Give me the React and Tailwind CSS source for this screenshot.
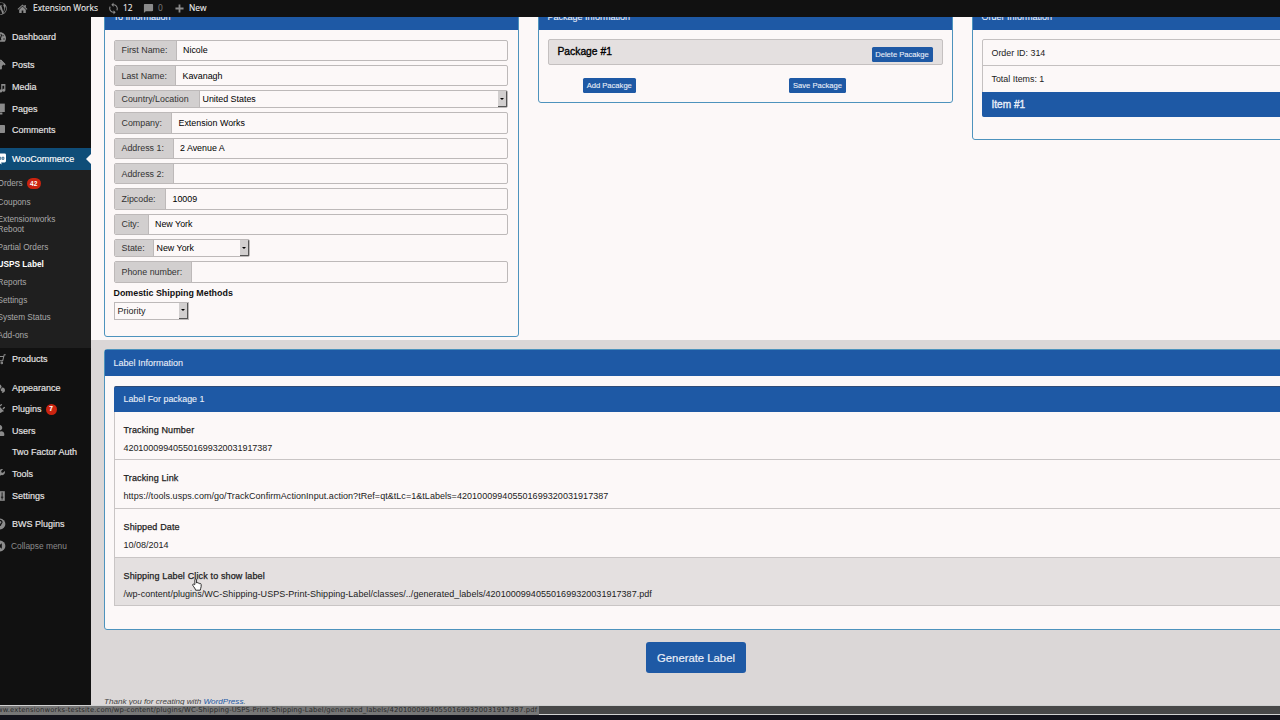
import React from 'react';
import clsx from 'clsx';
import { FaWordpressSimple, FaPaintBrush, FaPlug, FaWrench, FaUser, FaThumbtack, FaTachometerAlt } from 'react-icons/fa';
import { MdSync, MdModeComment } from 'react-icons/md';

const HomeIcon = () => (
    <svg viewBox="0 0 20 20" className="size-[11px]" fill="currentColor">
        <path d="M10 2.5 1 11l1.2 1.3L10 5l7.800 7.300L19 11l-3-2.800V3.500h-2.500v2.300z" />
        <path d="M10 6.500 4 12.200V18h4.500v-4.500h3V18H16v-5.800z" />
    </svg>
);

const PlusIcon = () => (
    <svg viewBox="0 0 10 10" className="size-[9px]" fill="currentColor">
        <path d="M4 0.500h2v3.500h3.500v2H6v3.500H4V6H.5V4H4z" />
    </svg>
);

const MediaIcon = () => (
    <svg viewBox="0 0 20 20" className="size-[12px]" fill="currentColor">
        <path d="M1 3h7l1 1h1v7H0V4h1zM12 5h7v10.500a2.500 2.500 0 1 1-2-2.400V8h-3v8.500a2.500 2.500 0 1 1-2-2.400z" />
    </svg>
);

const PagesIcon = () => (
    <svg viewBox="0 0 20 20" className="size-[12px]" fill="currentColor">
        <path d="M6 1h12v14H6z" />
        <path d="M2 5h3v11h9v3H2z" />
    </svg>
);

const WooIcon = () => (
    <svg viewBox="0 0 20 16" className="h-[12px] w-[14px]">
        <path d="M2 0h16a2 2 0 0 1 2 2v9a2 2 0 0 1-2 2h-5l1 3-5-3H2a2 2 0 0 1-2-2V2a2 2 0 0 1 2-2z" fill="#fff" />
        <path d="M10 5.500h2.500v3H10zM14.500 5.500H17v3h-2.500z" fill="none" stroke="#0f4d78" strokeWidth="1.100" />
    </svg>
);

const CartIcon = () => (
    <svg viewBox="0 0 20 20" className="size-[12px]" fill="none" stroke="currentColor" strokeWidth="1.700">
        <path d="M19.500 3H17l-2.500 10H4L2 6h13.500" />
        <circle cx="6" cy="16.500" r="1.300" />
        <circle cx="13" cy="16.500" r="1.300" />
    </svg>
);

const SettingsIcon = () => (
    <svg viewBox="0 0 20 20" className="size-[12px]">
        <path d="M2 2h16v16H2z" fill="currentColor" />
        <path d="M7 4v12M13.500 4v12M5 8h4M11.500 12h4" stroke="#111" strokeWidth="1.500" />
    </svg>
);

const BwsIcon = () => (
    <svg viewBox="0 0 20 20" className="size-[12px]">
        <circle cx="10" cy="10" r="9" fill="currentColor" />
        <path d="M8 4c4 0 6 1 5 4-1 2-3 2-2 5" fill="none" stroke="#111" strokeWidth="2" />
    </svg>
);

const CollapseIcon = () => (
    <svg viewBox="0 0 20 20" className="size-[12px]">
        <circle cx="10" cy="10" r="9" fill="currentColor" />
        <path d="M13 5.500v9L7 10z" fill="#111" />
    </svg>
);

const menuTop = [
    { label: 'Dashboard', icon: <FaTachometerAlt className="size-[12px]" /> },
    { separator: true },
    { label: 'Posts', icon: <FaThumbtack className="size-[11px] rotate-45" /> },
    { label: 'Media', icon: <MediaIcon /> },
    { label: 'Pages', icon: <PagesIcon /> },
    { label: 'Comments', icon: <MdModeComment className="size-[12px] -scale-x-100" /> },
    { separator: true },
];

const subMenu = [
    { label: 'Orders', badge: '42' },
    { label: 'Coupons' },
    { label: 'Extensionworks Reboot' },
    { label: 'Partial Orders' },
    { label: 'USPS Label', current: true },
    { label: 'Reports' },
    { label: 'Settings' },
    { label: 'System Status' },
    { label: 'Add-ons' },
];

const menuBottom = [
    { label: 'Products', icon: <CartIcon /> },
    { separator: true },
    { label: 'Appearance', icon: <FaPaintBrush className="size-[11px] -rotate-90" /> },
    { label: 'Plugins', icon: <FaPlug className="size-[11px] rotate-45" />, badge: '7' },
    { label: 'Users', icon: <FaUser className="size-[11px]" /> },
    { label: 'Two Factor Auth' },
    { label: 'Tools', icon: <FaWrench className="size-[11px]" /> },
    { label: 'Settings', icon: <SettingsIcon /> },
    { separator: true },
    { label: 'BWS Plugins', icon: <BwsIcon /> },
];

const MenuItem = ({ item }) => {
    if (item.separator) return <li className="h-[7px]" />;
    return (
        <li className="flex h-[21.6px] items-center text-[9px] text-[#e6e6e6] [-webkit-text-stroke:0.15px]">
            <span className="-ml-[6px] flex w-[18px] shrink-0 justify-start text-[#8b8b8b]">{item.icon}</span>
            <span className="whitespace-nowrap">{item.label}</span>
            {item.badge && (
                <span className="ml-[4px] flex size-[11px] items-center justify-center rounded-full bg-[#cb2410] text-[6.5px] font-bold text-white">
                    {item.badge}
                </span>
            )}
        </li>
    );
};

const Sidebar = () => (
    <nav className="w-[91px] shrink-0 overflow-hidden bg-[#111] pt-[26px]">
        <ul>
            {menuTop.map((item, i) => <MenuItem key={i} item={item} />)}
            <li>
                <div className="relative flex h-[21.6px] items-center bg-[#0f4d78] text-[9px] text-white [-webkit-text-stroke:0.15px]">
                    <span className="-ml-[8px] w-[20px] shrink-0"><WooIcon /></span>
                    WooCommerce
                    <span className="absolute right-0 top-[6px] border-y-[5px] border-r-[5px] border-y-transparent border-r-[#fcf8f8]" />
                </div>
                <ul className="bg-[#1f1f1f] pb-[3.6px] pt-[4.4px] text-[8.25px] text-[#a9a9a9]">
                    {subMenu.map((item) => (
                        <li
                            key={item.label}
                            className={clsx(
                                '-ml-[2.5px] flex min-h-[17.6px] items-center leading-[10.3px]',
                                item.label === 'Orders' && 'h-[20px]',
                                item.label.startsWith('Ext') && 'h-[27.600px] w-[75px]',
                                item.current && 'font-bold text-white'
                            )}
                        >
                            {item.label}
                            {item.badge && (
                                <span className="ml-[4px] flex h-[11px] w-[14px] items-center justify-center rounded-full bg-[#cb2410] text-[6.5px] font-bold text-white">
                                    {item.badge}
                                </span>
                            )}
                        </li>
                    ))}
                </ul>
            </li>
            {menuBottom.map((item, i) => <MenuItem key={i} item={item} />)}
            <li className="flex h-[21.6px] items-center text-[8.400px] text-[#8b8b8b]">
                <span className="-ml-[6px] w-[17px] shrink-0"><CollapseIcon /></span>
                Collapse menu
            </li>
        </ul>
    </nav>
);

const AdminBar = () => (
    <header className="absolute inset-x-0 top-0 z-10 flex h-[17px] items-center bg-[#111] pb-[1px] font-['Open_Sans',sans-serif] text-[8.4px] text-[#eee] [-webkit-text-stroke:0.1px]">
        <FaWordpressSimple className="-ml-[6px] size-[13px] text-[#8b8b8b]" />
        <span className="ml-[10px] text-[#8b8b8b]"><HomeIcon /></span>
        <span className="ml-[5px] w-[64px] whitespace-nowrap">Extension Works</span>
        <MdSync className="ml-[10px] size-[13px] text-[#8b8b8b]" />
        <span className="ml-[3px] w-[10px]">12</span>
        <MdModeComment className="ml-[10px] size-[11px] -scale-x-100 text-[#8b8b8b]" />
        <span className="ml-[4px] w-[5px] text-[#777]">0</span>
        <span className="ml-[12px] text-[#8b8b8b]"><PlusIcon /></span>
        <span className="ml-[5px]">New</span>
    </header>
);

const Panel = ({ title, className, children }) => (
    <section className={clsx('rounded-[3px] border border-[#4d93bd] bg-[#fcf8f8]', className)}>
        <h3 className="flex h-[26px] items-center bg-[#1e59a5] pl-[9px] text-[9px] text-[#e9eef8] [-webkit-text-stroke:0.1px]">{title}</h3>
        {children}
    </section>
);

const SelectArrow = () => (
    <span className="flex h-full w-[9px] shrink-0 items-center justify-center border-b border-r border-[#555] bg-[#d2cfcf]">
        <span className="border-x-2 border-t-2 border-x-transparent border-t-black" />
    </span>
);

const fields = [
    { label: 'First Name:', value: 'Nicole', width: 'w-[62px]' },
    { label: 'Last Name:', value: 'Kavanagh', width: 'w-[61.5px]' },
    { label: 'Country/Location', value: 'United States', width: 'w-[85px]', select: true },
    { label: 'Company:', value: 'Extension Works', width: 'w-[57.5px]' },
    { label: 'Address 1:', value: '2 Avenue A', width: 'w-[59px]' },
    { label: 'Address 2:', value: '', width: 'w-[59px]' },
    { label: 'Zipcode:', value: '10009', width: 'w-[51.5px]' },
    { label: 'City:', value: 'New York', width: 'w-[34px]' },
    { label: 'State:', value: 'New York', width: 'w-[39px]', select: true, short: true },
    { label: 'Phone number:', value: '', width: 'w-[77px]' },
];

const Field = ({ field }) => (
    <div
        className={clsx(
            'flex items-stretch overflow-hidden rounded-[2px] border border-[#bdb9b9]',
            field.select ? 'h-[18px]' : 'h-[21.5px]',
            field.short ? 'w-[136.5px]' : 'w-[394.5px]'
        )}
    >
        <label className={clsx('flex shrink-0 items-center whitespace-nowrap border-r border-[#bdb9b9] bg-[#d2cfcf] pl-[7px] text-[8.9px] text-[#333]', field.width)}>
            {field.label}
        </label>
        <div className={clsx('flex grow items-center text-[8.9px] text-black', field.select ? 'pl-[3px]' : 'pl-[6.5px]')}>{field.value}</div>
        {field.select && <SelectArrow />}
    </div>
);

const SmallButton = ({ className, children }) => (
    <button type="button" className={clsx('flex h-[15px] items-center justify-center whitespace-nowrap rounded-[1.5px] bg-[#1e59a5] text-[7.6px] text-[#e9eef8] [-webkit-text-stroke:0.1px]', className)}>
        {children}
    </button>
);

const labelRows = [
    { title: 'Tracking Number', text: '420100099405501699320031917387', spacing: 'tracking-[-0.05px]' },
    {
        title: 'Tracking Link',
        text: 'https://tools.usps.com/go/TrackConfirmActionInput.action?tRef=qt&tLc=1&tLabels=420100099405501699320031917387',
        spacing: 'tracking-[0.042px]',
    },
    { title: 'Shipped Date', text: '10/08/2014' },
    {
        title: 'Shipping Label Click to show label',
        text: '/wp-content/plugins/WC-Shipping-USPS-Print-Shipping-Label/classes/../generated_labels/420100099405501699320031917387.pdf',
        spacing: 'tracking-[0.033px]',
        hover: true,
    },
];

const HandCursor = () => (
    <svg viewBox="0 0 14 18" className="absolute left-[192px] top-[578px] z-10 h-[13px] w-[10px]">
        <path
            d="M4 9V2.500C4 .8 6.400.8 6.400 2.500V7c.3-1 2.100-.9 2.200.3.500-.8 2-.6 2.100.6.500-.6 2.100-.4 2.100 1V12c0 2-1.300 2.800-1.300 5H5c0-2-2.200-3.800-4-7-.6-1.400 1-2.200 2-.900z"
            fill="#fff"
            stroke="#222"
            strokeWidth="1.300"
        />
    </svg>
);

const App = () => (
    <div className="relative h-[720px] w-[1280px] overflow-hidden bg-[#dbd7d7] font-['Liberation_Sans',Arial,sans-serif] text-[9px] leading-[12px]">
        <AdminBar />
        <div className="flex h-[705px]">
            <Sidebar />
            <main className="w-[1189px] shrink-0 overflow-hidden">
                <div className="flex h-[340px] items-start gap-[19px] bg-[#fcf8f8] pl-[12.5px] pt-[3px]">
                    <Panel title="To Information" className="h-[333.5px] w-[415px] shrink-0">
                        <div className="flex flex-col gap-[3.9px] pl-[9px] pt-[9.5px]">
                            {fields.map((field) => <Field key={field.label} field={field} />)}
                        </div>
                        <div className="pl-[9px] pt-[4px]">
                            <p className="text-[8.9px] font-bold text-[#111]">Domestic Shipping Methods</p>
                            <div className="mt-[3px] flex h-[18px] w-[75px] items-center border border-[#bdb9b9] text-[#222]">
                                <span className="grow pl-[3px]">Priority</span>
                                <SelectArrow />
                            </div>
                        </div>
                    </Panel>

                    <Panel title="Package Information" className="h-[100px] w-[415px] shrink-0">
                        <div className="mx-[9px] mt-[9px] flex h-[26px] items-start justify-between rounded-[2px] border border-[#c4c0c0] bg-[#e4e0e0] pl-[9px] pr-[9px]">
                            <h4 className="pt-[6px] text-[10.3px] text-black [-webkit-text-stroke:0.35px]">Package #1</h4>
                            <SmallButton className="mt-[7px] w-[61px]">Delete Pacakge</SmallButton>
                        </div>
                        <div className="mt-[13px] flex gap-[153px] pl-[44px]">
                            <SmallButton className="w-[53.5px]">Add Pacakge</SmallButton>
                            <SmallButton className="w-[57px]">Save Package</SmallButton>
                        </div>
                    </Panel>

                    <Panel title="Order Information" className="h-[136.5px] w-[415px] shrink-0">
                        <div className="mx-[9px] mt-[9px] rounded-[2px] border border-[#c4c0c0] text-[8.9px] text-[#222]">
                            <p className="flex h-[26px] items-center border-b border-[#c4c0c0] pl-[9px]">Order ID: 314</p>
                            <p className="flex h-[26px] items-center pl-[9px]">Total Items: 1</p>
                            <p className="-mx-px -mb-px flex h-[25px] items-center rounded-b-[2px] bg-[#1e59a5] pl-[10px] text-[10.1px] text-[#e9eef8] [-webkit-text-stroke:0.35px]">Item #1</p>
                        </div>
                    </Panel>
                </div>

                <Panel title="Label Information" className="ml-[12.5px] mt-[9px] h-[281px] w-[1268px]">
                    <div className="ml-[9px] mt-[10px] w-[1248px]">
                        <h4 className="flex h-[25.5px] items-center rounded-t-[2px] border-t border-[#2d4b78] bg-[#1e59a5] pl-[10px] text-[8.9px] text-[#e9eef8] [-webkit-text-stroke:0.1px]">Label For package 1</h4>
                        {labelRows.map((row) => (
                            <div
                                key={row.title}
                                className={clsx('h-[48.7px] border-x border-b border-[#c9c5c5] pl-[9px] pt-[12px] text-[#222]', row.hover && 'bg-[#e4e0e0]')}
                            >
                                <p className="whitespace-nowrap tracking-[0.14px] [-webkit-text-stroke:0.25px]">{row.title}</p>
                                <p className={clsx('mt-[6px] whitespace-nowrap', row.spacing)}>{row.text}</p>
                            </div>
                        ))}
                    </div>
                </Panel>

                <div className="mt-[12px] pl-[555px]">
                    <button type="button" className="h-[31px] w-[100px] rounded-[3px] bg-[#1e59a5] text-[11.3px] text-[#e9eef8] [-webkit-text-stroke:0.2px]">
                        Generate Label
                    </button>
                </div>
                <p className="mt-[23px] whitespace-nowrap pl-[13px] text-[8.1px] italic text-[#444]">
                    Thank you for creating with <a className="text-[#1e59a5] underline">WordPress</a>.
                </p>
            </main>
        </div>

        <HandCursor />

        <footer className="relative flex h-[15px] flex-col bg-[#12131b]">
            <div className="flex h-[10px] items-center border-y border-[#d0d0d0] bg-[#484848]">
                <span className="flex h-[9px] w-[539px] items-center overflow-hidden whitespace-nowrap bg-[#777] font-['DejaVu_Sans',sans-serif] text-[6.8px] leading-[8px] tracking-[0.14px] text-[#2b2b2b]">
                    <span className="-ml-[3px]">
                        ww.extensionworks-testsite.com/wp-content/plugins/WC-Shipping-USPS-Print-Shipping-Label/generated_labels/420100099405501699320031917387.pdf
                    </span>
                </span>
            </div>
        </footer>
    </div>
);

export default App;
